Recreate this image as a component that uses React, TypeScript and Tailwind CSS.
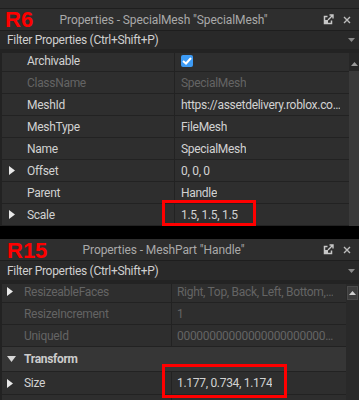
import type { ReactNode } from "react";

type Row = {
  name: string;
  value?: string;
  dim?: boolean;
  arrow?: boolean;
  check?: boolean;
  section?: boolean;
  h?: string;
};

const r6Rows: Row[] = [
  { name: "Archivable", check: true },
  { name: "ClassName", value: "SpecialMesh", dim: true },
  { name: "MeshId", value: "https://assetdelivery.roblox.co…" },
  { name: "MeshType", value: "FileMesh" },
  { name: "Name", value: "SpecialMesh" },
  { name: "Offset", value: "0, 0, 0", arrow: true },
  { name: "Parent", value: "Handle" },
  { name: "Scale", value: "1.5, 1.5, 1.5", arrow: true },
];

const r15Rows: Row[] = [
  { name: "ResizeableFaces", value: "Right, Top, Back, Left, Bottom,…", dim: true, arrow: true },
  { name: "ResizeIncrement", value: "1", dim: true },
  { name: "UniqueId", value: "00000000000000000000000…", dim: true },
  { name: "Transform", section: true, h: "h-[25px]" },
  { name: "Size", value: "1.177, 0.734, 1.174", arrow: true, h: "h-[23px]" },
  { name: "" },
];

function RightTri() {
  return (
    <svg width="6" height="9" viewBox="0 0 6 9">
      <path d="M0 0L6 4.5L0 9Z" fill="#e8e8e8" />
    </svg>
  );
}

function DownTri() {
  return (
    <svg width="9" height="6" viewBox="0 0 9 6">
      <path d="M0 0H9L4.5 6Z" fill="#d8d8d8" />
    </svg>
  );
}

function Checkbox() {
  return (
    <span className="flex h-[12px] w-[12px] items-center justify-center rounded-[2px] bg-[#3d9bf5]">
      <svg width="10" height="8" viewBox="0 0 10 8">
        <path d="M1 4L4 6.5L9 1" stroke="#fff" strokeWidth="2" fill="none" />
      </svg>
    </span>
  );
}

function TitleBar({ title }: { title: string }) {
  return (
    <div className="flex h-[22px] items-center border-b border-[#1e1e1e] bg-[#2e2e2e]">
      <div className="flex-1 pl-[8px] text-center text-[12px] tracking-[-0.1px] text-[#a9a9a9]">
        {title}
      </div>
      <div className="flex w-[40px] items-center gap-[9px] pl-[4px]">
        <svg width="11" height="11" viewBox="0 0 11 11">
          <path d="M4.5 2.5H1.5V9.5H8.5V6.5" stroke="#c8c8c8" strokeWidth="1.5" fill="none" />
          <rect x="2" y="6" width="3" height="3" fill="#c8c8c8" />
          <path d="M5 6L10 1M6.5 1H10V4.5" stroke="#c8c8c8" strokeWidth="1.4" fill="none" />
        </svg>
        <svg width="8" height="8" viewBox="0 0 8 8">
          <path d="M1 1L7 7M7 1L1 7" stroke="#bdbdbd" strokeWidth="1.4" />
        </svg>
      </div>
    </div>
  );
}

function FilterBar({ h }: { h: string }) {
  return (
    <div className={`flex ${h} items-center justify-between bg-[#292929] pl-[7px] pr-[4px]`}>
      <span className="text-[12px] tracking-[-0.3px] text-[#cfcfcf]">
        Filter Properties (Ctrl+Shift+P)
      </span>
      <svg width="7" height="4" viewBox="0 0 7 4">
        <path d="M0 0H7L3.5 4Z" fill="#8a8a8a" />
      </svg>
    </div>
  );
}

function PropRow({
  row,
  nameW,
  arrowL,
  nameL,
  valueL,
}: {
  row: Row;
  nameW: string;
  arrowL: string;
  nameL: string;
  valueL: string;
}) {
  if (row.section) {
    return (
      <div className={`relative flex ${row.h ?? "h-[22px]"} items-center border-b border-[#222] bg-[#363636]`}>
        <span className={`absolute ${arrowL} flex`}>
          <DownTri />
        </span>
        <span className={`${nameL} text-[12px] font-bold tracking-[-0.3px] text-[#cccccc]`}>
          {row.name}
        </span>
      </div>
    );
  }
  const color = row.dim ? "text-[#646464]" : "text-[#d2d2d2]";
  return (
    <div className={`flex ${row.h ?? "h-[22px]"} border-b border-[#222]`}>
      <div className={`relative flex ${nameW} shrink-0 items-center border-r border-[#222] ${nameL}`}>
        {row.arrow ? (
          <span className={`absolute ${arrowL} flex`}>
            <RightTri />
          </span>
        ) : null}
        <span className={`text-[12px] tracking-[-0.3px] ${color}`}>{row.name}</span>
      </div>
      <div className={`flex min-w-0 flex-1 items-center pr-[4px] ${valueL}`}>
        {row.check ? (
          <Checkbox />
        ) : (
          <span className={`min-w-0 truncate text-[12px] tracking-[-0.3px] ${color}`}>
            {row.value}
          </span>
        )}
      </div>
    </div>
  );
}

function Label({ children, pos }: { children: ReactNode; pos: string }) {
  return (
    <div
      className={`absolute ${pos} text-[22px] font-bold leading-none text-[#ff0000] font-['Liberation_Sans',Arial,sans-serif]`}
    >
      {children}
    </div>
  );
}

export default function App() {
  return (
    <div className="relative h-[400px] w-[359px] overflow-hidden bg-black font-['Roboto',sans-serif]">
      {/* R6 panel */}
      <div className="flex h-[226px] flex-col bg-[#2e2e2e]">
        <div className="h-[9px] border-b border-[#1e1e1e] bg-[#2c2c2c]" />
        <TitleBar title={'Properties - SpecialMesh "SpecialMesh"'} />
        <FilterBar h="h-[18px]" />
        <div className="h-[4px] bg-[#232323]" />
        <div className="flex min-h-0 flex-1 overflow-hidden">
          <div className="min-w-0 flex-1 border-l-2 border-[#222]">
            <div className="-mt-[3px]">
              {r6Rows.map((r) => (
                <PropRow
                  key={r.name}
                  row={r}
                  nameW="w-[173px]"
                  arrowL="left-[7px]"
                  nameL="pl-[25px]"
                  valueL="pl-[6px]"
                />
              ))}
            </div>
          </div>
          <div className="flex w-[10px] flex-col bg-[#262626] pt-[4px]">
            <div className="flex h-[14px] items-center justify-center">
              <svg width="7" height="4" viewBox="0 0 7 4">
                <path d="M0 4H7L3.5 0Z" fill="#9a9a9a" />
              </svg>
            </div>
            <div className="flex-1 bg-[#3a3a3a]" />
          </div>
        </div>
      </div>

      <div className="h-[13px]" />

      {/* R15 panel */}
      <div className="flex h-[161px] flex-col bg-[#2e2e2e]">
        <TitleBar title={'Properties - MeshPart "Handle"'} />
        <FilterBar h="h-[19px]" />
        <div className="h-[4px] bg-[#232323]" />
        <div className="flex min-h-0 flex-1 overflow-hidden">
          <div className="min-w-0 flex-1 border-l-2 border-[#222]">
            <div className="-mt-[3px]">
              {r15Rows.map((r, i) => (
                <PropRow
                  key={i}
                  row={r}
                  nameW="w-[170px]"
                  arrowL="left-[5px]"
                  nameL="pl-[22px]"
                  valueL="pl-[5px]"
                />
              ))}
            </div>
          </div>
          <div className="flex w-[13px] flex-col bg-[#292929] pt-[2px]">
            <div className="mx-[1px] flex h-[14px] items-center justify-center border border-[#4a4a4a] bg-[#3c3c3c]">
              <svg width="7" height="4" viewBox="0 0 7 4">
                <path d="M0 4H7L3.5 0Z" fill="#d0d0d0" />
              </svg>
            </div>
          </div>
        </div>
      </div>

      <Label pos="top-[9px] left-[5px]">R6</Label>
      <Label pos="top-[240px] left-[7px]">R15</Label>

      {/* highlight boxes */}
      <div className="absolute left-[162px] top-[200px] h-[26px] w-[94px] border-[3px] border-[#ff0000]" />
      <div className="absolute left-[162px] top-[364px] h-[34px] w-[125px] border-[3px] border-[#ff0000]" />
    </div>
  );
}
